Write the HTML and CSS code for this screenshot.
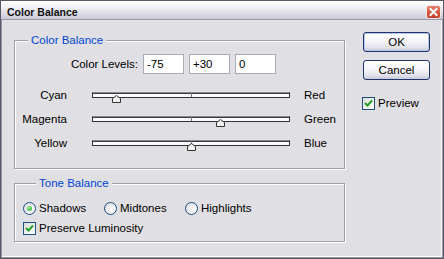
FILE: index.html
```html
<!DOCTYPE html>
<html>
<head>
<meta charset="utf-8">
<link rel="stylesheet" href="styles.css">
</head>
<body>
<div class="window">
  <div class="titlebar">
    <span class="title">Color Balance</span>
    <svg class="close" width="15" height="14" viewBox="0 0 15 14">
      <defs>
        <linearGradient id="cg" x1="0" y1="0" x2="0" y2="1">
          <stop offset="0" stop-color="#e8806c"/>
          <stop offset="1" stop-color="#c2361f"/>
        </linearGradient>
      </defs>
      <rect x="0.5" y="0.5" width="14" height="13" rx="2.5" fill="url(#cg)" stroke="#f4e8e4"/>
      <path d="M4.5 4 L10.5 10 M10.5 4 L4.5 10" stroke="#fff" stroke-width="2" stroke-linecap="square"/>
    </svg>
  </div>
  <div class="client">
    <div class="main">
      <div class="group group-color">
        <span class="legend">Color Balance</span>
        <div class="levels">
          <span class="levels-label">Color Levels:</span>
          <span class="field">-75</span>
          <span class="field">+30</span>
          <span class="field">0</span>
        </div>
        <div class="sliders">
          <span class="lbl-left">Cyan</span>
          <div class="slider">
            <div class="track"><span class="tick"></span></div>
            <svg class="thumb" style="left: calc(12.5% - 4.5px)" width="9" height="8" viewBox="0 0 9 8"><polygon points="0.5,7.5 0.5,3.5 4.5,0.5 8.5,3.5 8.5,7.5" fill="#f2f2f2" stroke="#333"/></svg>
          </div>
          <span class="lbl-right">Red</span>

          <span class="lbl-left">Magenta</span>
          <div class="slider">
            <div class="track"><span class="tick"></span></div>
            <svg class="thumb" style="left: calc(65% - 4.5px)" width="9" height="8" viewBox="0 0 9 8"><polygon points="0.5,7.5 0.5,3.5 4.5,0.5 8.5,3.5 8.5,7.5" fill="#f2f2f2" stroke="#333"/></svg>
          </div>
          <span class="lbl-right">Green</span>

          <span class="lbl-left">Yellow</span>
          <div class="slider">
            <div class="track"><span class="tick"></span></div>
            <svg class="thumb" style="left: calc(50% - 4.5px)" width="9" height="8" viewBox="0 0 9 8"><polygon points="0.5,7.5 0.5,3.5 4.5,0.5 8.5,3.5 8.5,7.5" fill="#f2f2f2" stroke="#333"/></svg>
          </div>
          <span class="lbl-right">Blue</span>
        </div>
      </div>

      <div class="group group-tone">
        <span class="legend">Tone Balance</span>
        <div class="radios">
          <label class="option"><span class="radio"><span class="dot"></span></span>Shadows</label>
          <label class="option"><span class="radio"></span>Midtones</label>
          <label class="option"><span class="radio"></span>Highlights</label>
        </div>
        <label class="option check-row"><span class="box"><svg width="9" height="9" viewBox="0 0 9 9"><path d="M1 4 L3.5 6.5 L8 1.5" fill="none" stroke="#21a121" stroke-width="2"/></svg></span>Preserve Luminosity</label>
      </div>
    </div>

    <div class="side">
      <div class="btn btn-default">OK</div>
      <div class="btn">Cancel</div>
      <label class="option preview"><span class="box"><svg width="9" height="9" viewBox="0 0 9 9"><path d="M1 4 L3.5 6.5 L8 1.5" fill="none" stroke="#21a121" stroke-width="2"/></svg></span>Preview</label>
    </div>
  </div>
</div>
</body>
</html>
```

FILE: styles.css
```css
* {
  box-sizing: border-box;
}

html, body {
  margin: 0;
  padding: 0;
  background: #e0dfe3;
}

body {
  font-family: "Liberation Sans", Arial, sans-serif;
  font-size: 11.5px;
  color: #000;
}

.window {
  width: 444px;
  height: 259px;
  border: 1px solid #585868;
  background: #e0dfe3;
  display: flex;
  flex-direction: column;
}

.titlebar {
  height: 19px;
  flex: none;
  display: flex;
  align-items: flex-start;
  padding: 3px 2px 0 6px;
  background: linear-gradient(#ffffff 0%, #f4f4f8 30%, #dedee8 65%, #c9c9d8 100%);
  border-bottom: 1px solid #9a9aac;
}

.title {
  font-weight: bold;
  font-size: 10.5px;
  line-height: 17px;
  color: #111;
}

.close {
  margin-left: auto;
  margin-top: 1px;
  display: block;
}

.client {
  flex: 1;
  display: flex;
  align-items: flex-start;
  padding: 0 0 0 12px;
  border: 1px solid #9494a4;
  border-top: none;
  box-shadow: inset -1px -1px 0 #fff;
}

.main {
  width: 331px;
  padding-top: 20px;
  display: flex;
  flex-direction: column;
}

.group {
  border: 1px solid #a0a0a4;
  box-shadow: 1px 1px 0 #fff, inset 1px 1px 0 #fff;
}

.legend {
  display: table;
  margin: -8px 0 0 13px;
  padding: 0 3px;
  line-height: 14px;
  color: #0046d5;
  background: #e0dfe3;
}

.group-color {
  padding-bottom: 11px;
}

.levels {
  display: flex;
  gap: 5px;
  margin-top: 7px;
  height: 20px;
}

.levels-label {
  width: 123px;
  text-align: right;
  line-height: 20px;
}

.field {
  width: 41px;
  height: 20px;
  border: 1px solid #a5acb2;
  background: #fff;
  padding: 0 3px;
  line-height: 18px;
}

.sliders {
  margin-top: 11px;
  display: grid;
  grid-template-columns: 52px 223px auto;
  grid-auto-rows: 24px;
}

.lbl-left {
  text-align: right;
  line-height: 14px;
  padding-top: 3px;
}

.lbl-right {
  line-height: 14px;
  padding-top: 3px;
  padding-left: 14px;
}

.slider {
  position: relative;
  margin-left: 25px;
  width: 198px;
  height: 24px;
}

.track {
  margin-top: 7px;
  height: 6px;
  border: 1px solid #333;
  border-top-color: #8c8c8c;
  background: #fbfbfb;
  box-shadow: inset 0 1px 0 #3a3a3a;
  display: flex;
  justify-content: center;
}

.tick {
  width: 1px;
  background: #7a7a7a;
}

.thumb {
  position: absolute;
  top: 10px;
  display: block;
}

.group-tone {
  margin-top: 14px;
  padding: 0 0 6px 8px;
}

.radios {
  display: flex;
  margin-top: 11px;
}

.option {
  display: flex;
  align-items: center;
  height: 14px;
  line-height: 14px;
  gap: 3px;
}

.radios .option {
  width: 81px;
}

.radio {
  width: 13px;
  height: 13px;
  border-radius: 50%;
  border: 1px solid #1c5180;
  background: radial-gradient(circle at 65% 65%, #ffffff 0%, #f2f2f4 40%, #d4d4dc 100%);
  display: flex;
  align-items: center;
  justify-content: center;
}

.dot {
  width: 5px;
  height: 5px;
  border-radius: 50%;
  background: radial-gradient(circle at 35% 35%, #8ef08e, #21a121);
}

.check-row {
  margin-top: 6px;
}

.box {
  width: 13px;
  height: 13px;
  border: 1px solid #1c5180;
  background: linear-gradient(135deg, #dcdcd7, #ffffff);
  display: flex;
  align-items: center;
  justify-content: center;
}

.box svg {
  display: block;
}

.side {
  margin-left: 18px;
  padding-top: 12px;
  width: 67px;
  display: flex;
  flex-direction: column;
}

.btn {
  width: 67px;
  height: 20px;
  border: 1px solid #1f3468;
  border-radius: 3px;
  background: linear-gradient(#ffffff 0%, #f6f6f9 45%, #e2e2ec 80%, #c8c8da 100%);
  text-align: center;
  line-height: 18px;
}

.btn-default {
  box-shadow: inset 0 0 0 1px #b4c6ee;
}

.btn + .btn {
  margin-top: 8px;
}

.preview {
  margin-top: 16px;
  margin-left: -1px;
}
```
